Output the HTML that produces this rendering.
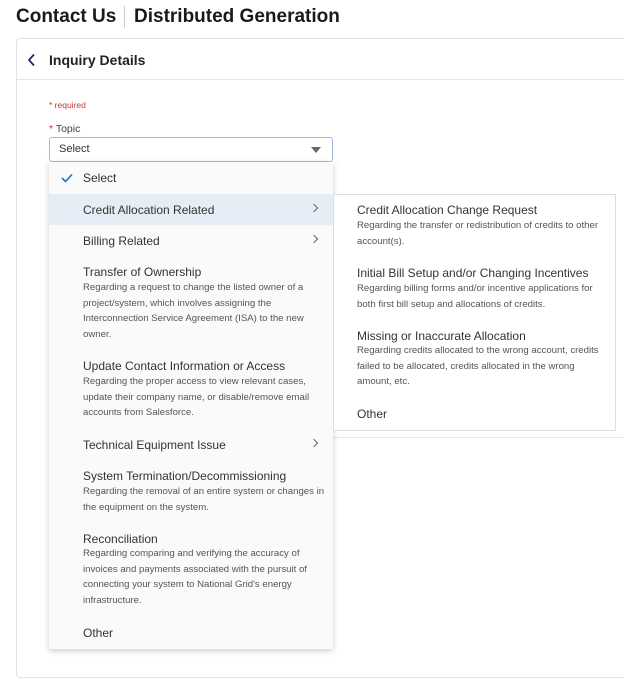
<!DOCTYPE html>
<html><head><style>
*{margin:0;padding:0;box-sizing:border-box}
body{width:624px;height:659px;background:#fff;font-family:"Liberation Sans",Arial,sans-serif;position:relative;overflow:hidden;color:#222}
.a{position:absolute;white-space:nowrap}
.t{font-size:12px;color:#333;line-height:14px}
.d{font-size:9.6px;color:#555;line-height:15.6px;white-space:normal}
.chev{position:absolute;width:6px;height:6px;border-right:1.3px solid #666;border-top:1.3px solid #666;transform:rotate(45deg)}
</style></head><body>
<div class="a" style="left:16px;top:6px;font-size:19px;font-weight:bold;color:#1a1a1a">Contact Us</div>
<div class="a" style="left:124px;top:6px;width:1px;height:22px;background:#ccc"></div>
<div class="a" style="left:134px;top:6px;font-size:19px;font-weight:bold;color:#1a1a1a">Distributed Generation</div>
<div class="a" style="left:16px;top:38px;width:620px;height:640px;border:1px solid #e2e2e2;border-radius:4px"></div>
<div class="a" style="left:17px;top:79px;width:620px;height:1px;background:#e5e5e5"></div>
<svg class="a" style="left:27px;top:53px" width="10" height="14"><path d="M7 1.5L2 7l5 5.5" fill="none" stroke="#1b2a6b" stroke-width="1.8"/></svg>
<div class="a" style="left:49px;top:52px;font-size:14px;font-weight:bold;color:#222">Inquiry Details</div>
<div class="a" style="left:49px;top:100px;font-size:8.5px;color:#c23934">* required</div>
<div class="a" style="left:49px;top:123px;font-size:10.5px;color:#444"><span style="color:#c23934">*</span> Topic</div>
<div class="a" style="left:49px;top:137px;width:284px;height:25px;border:1px solid #9bbbe0;border-radius:3px;background:#fff"></div>
<div class="a" style="left:59px;top:143px;font-size:11px;color:#333">Select</div>
<svg class="a" style="left:311px;top:147px" width="10" height="6"><path d="M0 0h10L5 6z" fill="#666"/></svg>
<div class="a" style="left:333px;top:437px;width:300px;height:1px;background:#e8e8e8"></div>

<div class="a" style="left:49px;top:162px;width:284px;height:487px;background:#fafafa;box-shadow:0 2px 6px rgba(0,0,0,.2)"></div>
<svg class="a" style="left:61px;top:173px" width="12" height="10"><path d="M1 5l3.5 3.5L11 1.5" fill="none" stroke="#1a73c8" stroke-width="1.6"/></svg>
<div class="a t" style="left:83px;top:171px">Select</div>
<div class="a" style="left:49px;top:194px;width:284px;height:31px;background:#e5eef6"></div>
<div class="a t" style="left:83px;top:203px">Credit Allocation Related</div>
<div class="chev" style="left:311px;top:205px"></div>
<div class="a t" style="left:83px;top:234px">Billing Related</div>
<div class="chev" style="left:311px;top:236px"></div>
<div class="a t" style="left:83px;top:265px">Transfer of Ownership</div>
<div class="a d" style="left:83px;top:280px;width:245px">Regarding a request to change the listed owner of a project/system, which involves assigning the Interconnection Service Agreement (ISA) to the new owner.</div>
<div class="a t" style="left:83px;top:359px">Update Contact Information or Access</div>
<div class="a d" style="left:83px;top:374px;width:250px">Regarding the proper access to view relevant cases, update their company name, or disable/remove email accounts from Salesforce.</div>
<div class="a t" style="left:83px;top:438px">Technical Equipment Issue</div>
<div class="chev" style="left:311px;top:440px"></div>
<div class="a t" style="left:83px;top:469px">System Termination/Decommissioning</div>
<div class="a d" style="left:83px;top:484px;width:250px">Regarding the removal of an entire system or changes in the equipment on the system.</div>
<div class="a t" style="left:83px;top:532px">Reconciliation</div>
<div class="a d" style="left:83px;top:546px;width:240px">Regarding comparing and verifying the accuracy of invoices and payments associated with the pursuit of connecting your system to National Grid's energy infrastructure.</div>
<div class="a t" style="left:83px;top:626px">Other</div>

<div class="a" style="left:333px;top:194px;width:283px;height:237px;background:#fff;border:1px solid #ddd"></div>
<div class="a t" style="left:357px;top:203px">Credit Allocation Change Request</div>
<div class="a d" style="left:357px;top:218px;width:245px">Regarding the transfer or redistribution of credits to other account(s).</div>
<div class="a t" style="left:357px;top:266px">Initial Bill Setup and/or Changing Incentives</div>
<div class="a d" style="left:357px;top:281px;width:245px">Regarding billing forms and/or incentive applications for both first bill setup and allocations of credits.</div>
<div class="a t" style="left:357px;top:329px">Missing or Inaccurate Allocation</div>
<div class="a d" style="left:357px;top:343px;width:245px">Regarding credits allocated to the wrong account, credits failed to be allocated, credits allocated in the wrong amount, etc.</div>
<div class="a t" style="left:357px;top:407px">Other</div>
</body></html>
